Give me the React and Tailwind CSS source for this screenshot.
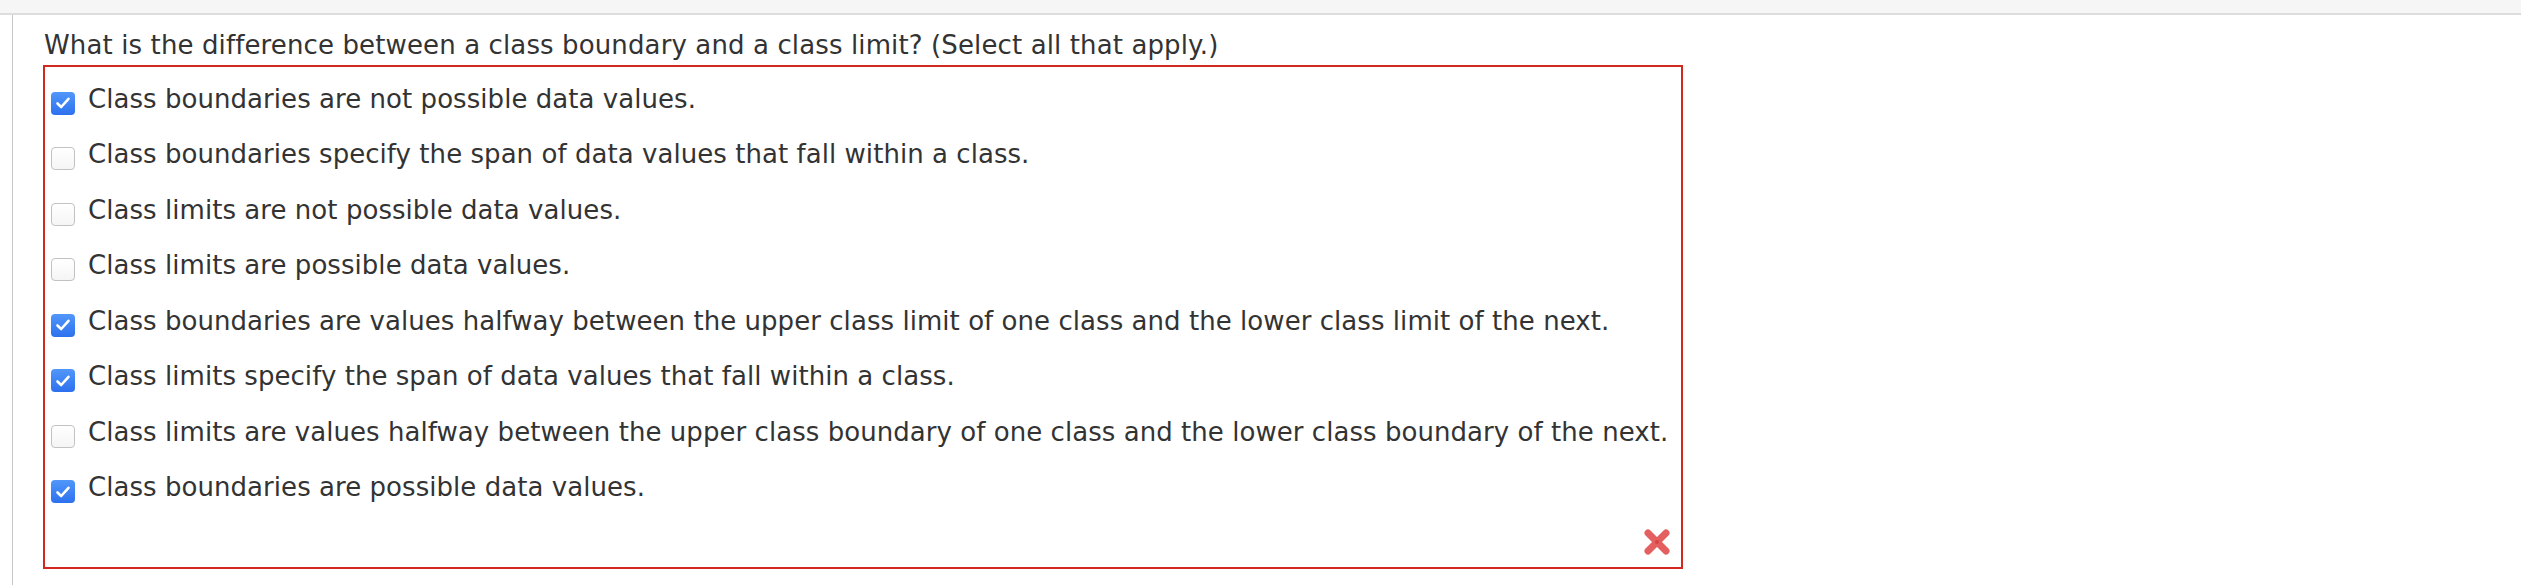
import React from "react";

const options = [
  { text: "Class boundaries are not possible data values.", checked: true },
  { text: "Class boundaries specify the span of data values that fall within a class.", checked: false },
  { text: "Class limits are not possible data values.", checked: false },
  { text: "Class limits are possible data values.", checked: false },
  {
    text: "Class boundaries are values halfway between the upper class limit of one class and the lower class limit of the next.",
    checked: true,
  },
  { text: "Class limits specify the span of data values that fall within a class.", checked: true },
  {
    text: "Class limits are values halfway between the upper class boundary of one class and the lower class boundary of the next.",
    checked: false,
  },
  { text: "Class boundaries are possible data values.", checked: true },
];

function Checkbox({ checked }) {
  if (checked) {
    return (
      <span className="mt-[8px] flex h-[23px] w-[24px] shrink-0 items-center justify-center rounded-[4px] bg-gradient-to-b from-[#5197fa] to-[#2d70ee]">
        <svg width="16" height="14" viewBox="0 0 16 14" fill="none">
          <path d="M2.5 7.5 L6.2 11 L13.5 2.8" stroke="#fff" strokeWidth="2.6" strokeLinecap="round" strokeLinejoin="round" />
        </svg>
      </span>
    );
  }
  return (
    <span className="mt-[8px] block h-[23px] w-[24px] shrink-0 rounded-[4px] border border-[#c2c2c2] bg-gradient-to-b from-white to-[#f5f5f5]" />
  );
}

function WrongMark() {
  return (
    <svg width="28" height="28" viewBox="0 0 28 28">
      <g stroke="#e35757" strokeWidth="7" strokeLinecap="round" opacity="0.95">
        <line x1="5" y1="5" x2="23" y2="23" />
        <line x1="23" y1="5" x2="5" y2="23" />
      </g>
      <circle cx="14" cy="14" r="2" fill="#d64545" />
    </svg>
  );
}

export default function App() {
  return (
    <div className="min-h-[585px] bg-white font-['DejaVu_Sans',sans-serif] text-[#333333]">
      <div className="h-[15px] border-b-2 border-[#dddddd] bg-[#f6f6f6]" />
      <div className="flex">
        <div className="ml-[12px] w-[1px] self-stretch bg-[#c6c6c6]" />
        <div className="ml-[30px] pt-[15px]">
          <div className="pl-[1px] text-[26px] leading-[30px] tracking-[0.12px]">
            What is the difference between a class boundary and a class limit? (Select all that apply.)
          </div>
          <div className="mt-[5px] flex w-[1640px] flex-col border-2 border-[#d2291e] pt-[8.75px] pr-[10px] pb-[11px] pl-[6px]">
            {options.map((o, i) => (
              <div key={i} className="flex h-[55.5px] items-start pt-[8px]">
                <Checkbox checked={o.checked} />
                <span className="ml-[13px] whitespace-nowrap text-[26px] leading-[30px] tracking-[0.05px]">{o.text}</span>
              </div>
            ))}
            <div className="flex justify-end pt-[8.25px]">
              <WrongMark />
            </div>
          </div>
          <div className="h-[16px]" />
        </div>
      </div>
    </div>
  );
}
